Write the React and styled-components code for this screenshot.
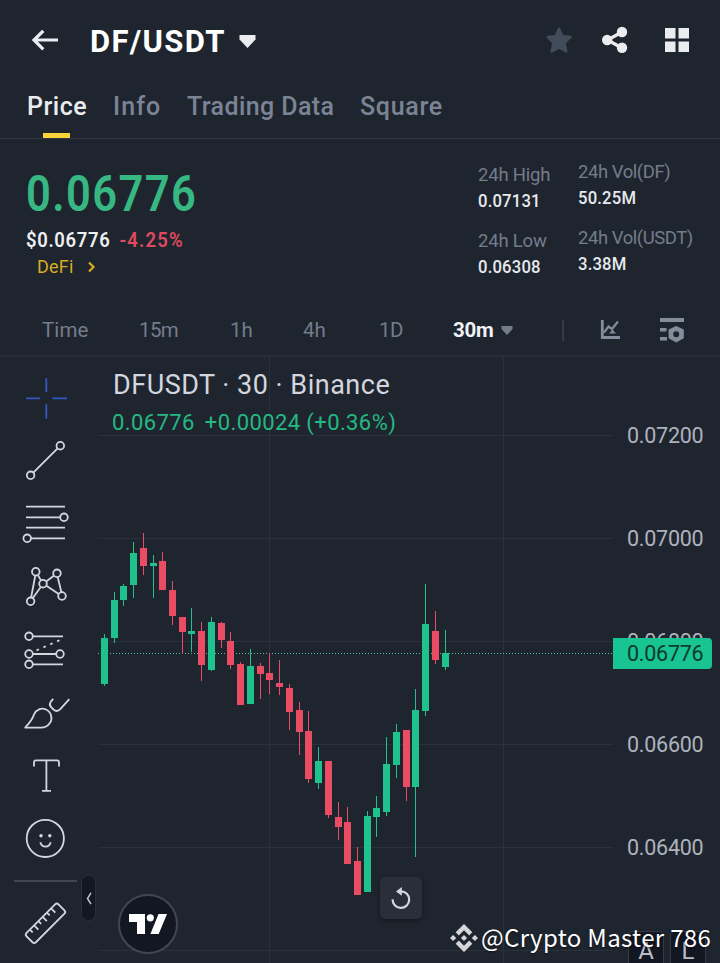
import styled, { createGlobalStyle } from 'styled-components';

const UP = '#1fc18c';
const DOWN = '#ea4d63';

const GlobalStyle = createGlobalStyle`
    * {
        box-sizing: border-box;
    }

    body {
        margin: 0;
        background-color: #1f252f;
        font-family: Roboto, 'Liberation Sans', sans-serif;
    }
`

const Screen = styled.div`
    width: 720px;
    height: 963px;
    display: flex;
    flex-direction: column;
    position: relative;
    overflow: hidden;
    background-color: #1f252f;
    white-space: nowrap;
`

const Header = styled.header`
    height: 82px;
    padding: 0 29px 0 31px;
    display: flex;
    align-items: center;
`

const Title = styled.h1`
    margin: 1px 13px 0 31px;
    font-size: 31px;
    font-weight: 700;
    letter-spacing: 1.3px;
    color: #fff;
`

const Actions = styled.div`
    margin-left: auto;
    display: flex;
    align-items: center;
    gap: 28px;
    height: 30px;
    margin-bottom: 2px;
`

const Tabs = styled.nav`
    height: 57px;
    padding-left: 27px;
    display: flex;
    border-bottom: 1px solid #303741;
`

const Tab = styled.a`
    width: ${({ $width }) => $width}px;
    margin-right: 27px;
    font-size: 25px;
    font-weight: 500;
    line-height: 49px;
    letter-spacing: ${({ $spacing }) => $spacing};
    color: ${({ $active }) => ($active ? '#eaecef' : '#7b8494')};

    &::after {
        content: '';
        display: block;
        width: 27px;
        height: 5px;
        margin: 2px auto 0;
        background-color: ${({ $active }) => ($active ? '#f8d33a' : 'transparent')};
    }
`

const Summary = styled.section`
    height: 165px;
    display: grid;
    grid-template-columns: 451px 100px 1fr;
    padding-left: 27px;
`

// Roboto digits squeezed to the narrow look of the price font
const LastPrice = styled.div`
    margin: 27px 0 0 -1px;
    font-size: 50px;
    font-weight: 600;
    line-height: 56px;
    letter-spacing: 1.6px;
    color: #37b883;
    transform: scaleX(0.87);
    transform-origin: left;
`

const FiatRow = styled.div`
    margin: 4px 0 0 -1px;
    display: flex;
    gap: 10px;
    font-size: 20.5px;
    font-weight: 600;
    line-height: 28px;
    letter-spacing: 0.75px;
    color: #eef0f3;
    transform: scaleX(0.9);
    transform-origin: left;
`

const Change = styled.span`
    letter-spacing: 1.3px;
    color: #e04a60;
`

const Category = styled.a`
    padding-left: 10px;
    display: flex;
    align-items: center;
    gap: 14px;
    font-size: 18px;
    line-height: 26px;
    letter-spacing: 0.2px;
    color: #d9ab1e;
`

const StatColumn = styled.div`
    padding-top: ${({ $top }) => $top}px;
    display: flex;
    flex-direction: column;
    gap: 14px;
    letter-spacing: ${({ $spacing }) => $spacing};
`

const StatLabel = styled.div`
    font-size: 18.5px;
    line-height: 26px;
    color: #737c8a;
`

const StatValue = styled.div`
    font-size: 18.5px;
    font-weight: 500;
    line-height: 26px;
    letter-spacing: 0.2px;
    color: #e6e9ed;
    transform: scaleX(0.9);
    transform-origin: left;
`

const Intervals = styled.div`
    height: 53px;
    padding: 1px 0 0 42px;
    display: grid;
    grid-template-columns: 97px 91px 73px 76px 74px 109px 38px 59px auto;
    align-items: center;
    border-bottom: 2px solid #282e38;
`

const Interval = styled.span`
    display: flex;
    align-items: center;
    gap: 8px;
    font-size: 20.5px;
    font-weight: ${({ $active }) => ($active ? 700 : 400)};
    letter-spacing: ${({ $spacing }) => $spacing};
    color: ${({ $active }) => ($active ? '#f0f2f5' : '#737c8b')};
`

const Separator = styled.span`
    width: 2px;
    height: 21px;
    background-color: #343b46;
`

const Body = styled.main`
    flex: 1;
    display: grid;
    grid-template-columns: 98px 515px 1fr;
`

const Toolbar = styled.aside`
    position: relative;
    padding-top: 9px;
    display: flex;
    flex-direction: column;
`

const ToolIcon = styled.svg`
    width: 90px;
    height: 63px;
    flex: none;
    fill: none;
    stroke: ${({ $color }) => $color || '#d3d6df'};
    stroke-width: 1.8;
    stroke-linejoin: round;
`

const ToolDivider = styled.div`
    width: 63px;
    height: 2px;
    margin: 10px 0 10px 14px;
    flex: none;
    background-color: #434651;
`

const CollapseHandle = styled.button`
    position: absolute;
    left: 81px;
    top: 518px;
    width: 15px;
    height: 46px;
    padding: 0;
    display: grid;
    place-items: center;
    border: 1px solid #2a2e39;
    border-radius: 7px;
    background-color: #131722;
`

const Pane = styled.section`
    position: relative;
    height: 606px;
`

const Plot = styled.svg`
    display: block;
    width: 515px;
    height: 606px;
`

const Legend = styled.div`
    position: absolute;
    left: 15px;
    top: 9px;
`

const Symbol = styled.div`
    font-size: 27px;
    line-height: 38px;
    letter-spacing: 0.5px;
    color: #d3d6df;
`

const LegendValues = styled.div`
    display: flex;
    gap: 10px;
    margin-left: -1px;
    font-size: 22px;
    line-height: 37px;
    letter-spacing: 0.4px;
    color: #24b981;
`

const Badge = styled.div`
    position: absolute;
    left: 20px;
    bottom: 9px;
    width: 60px;
    height: 60px;
    display: grid;
    place-items: center;
    border: 2px solid #434651;
    border-radius: 50%;
    background-color: #131722;
`

const ResetButton = styled.button`
    position: absolute;
    left: 282px;
    top: 520px;
    width: 42px;
    height: 42px;
    padding: 0;
    display: grid;
    place-items: center;
    border: 0;
    border-radius: 5px;
    background-color: #2a2e39;
    box-shadow: 0 2px 5px rgba(0, 0, 0, 0.4);
`

const PriceAxis = styled.aside`
    position: relative;
    height: 606px;
    padding: 27px 0 0 14px;
    overflow: hidden;
`

const AxisLabel = styled.div`
    font-size: 21.5px;
    line-height: 103px;
    letter-spacing: -0.25px;
    color: #aeb2bd;
`

const PriceTag = styled.div`
    position: absolute;
    left: 0;
    top: 281px;
    width: 99px;
    height: 31px;
    padding-left: 14px;
    border-radius: 0 4px 4px 0;
    background-color: #17c492;
    font-size: 21.5px;
    line-height: 32px;
    letter-spacing: -0.25px;
    color: #10392f;
`

const ScaleButtons = styled.div`
    position: absolute;
    left: 15px;
    top: 574px;
    display: flex;
    gap: 6px;
`

const ScaleButton = styled.button`
    width: 36px;
    height: 40px;
    padding: 0;
    border: 1px solid #363a45;
    border-radius: 5px;
    background-color: #131722;
    font-family: inherit;
    font-size: 24px;
    line-height: 38px;
    color: #b9bdc9;
`

const Watermark = styled.div`
    position: absolute;
    left: 450px;
    top: 922px;
    display: flex;
    align-items: center;
    gap: 3px;
    font-family: 'Noto Sans CJK SC', sans-serif;
    font-size: 24px;
    line-height: 34px;
    letter-spacing: 0.35px;
    color: #fff;
    text-shadow: 0 1px 2px rgba(0, 0, 0, 0.6);
`

const WatermarkName = styled.span`
    margin-top: -2px;
`

// [x, wick top, body top, body bottom, wick bottom, rising]
const candles = [
    [101, 634, 638, 684, 686, 1],
    [111, 592, 600, 638, 643, 1],
    [120, 584, 586, 600, 606, 1],
    [130, 542, 553, 585, 598, 1],
    [140, 533, 548, 566, 575, 0],
    [150, 555, 563, 566, 598, 1],
    [159, 552, 561, 590, 590, 0],
    [169, 581, 590, 616, 625, 0],
    [179, 617, 617, 632, 654, 0],
    [188, 608, 631, 634, 652, 1],
    [198, 622, 631, 665, 681, 0],
    [208, 617, 622, 670, 671, 1],
    [218, 622, 623, 640, 648, 0],
    [227, 632, 641, 665, 669, 0],
    [237, 662, 664, 705, 705, 0],
    [247, 649, 666, 704, 704, 1],
    [257, 663, 666, 674, 699, 0],
    [266, 653, 673, 680, 694, 0],
    [276, 660, 683, 687, 695, 0],
    [286, 684, 688, 712, 730, 0],
    [296, 702, 710, 732, 755, 0],
    [305, 711, 731, 779, 783, 0],
    [315, 747, 761, 783, 789, 1],
    [325, 761, 761, 815, 818, 0],
    [335, 802, 817, 827, 840, 0],
    [344, 807, 822, 864, 864, 0],
    [354, 847, 861, 895, 895, 0],
    [364, 811, 816, 892, 892, 1],
    [373, 796, 808, 817, 837, 1],
    [383, 737, 764, 812, 816, 1],
    [393, 724, 732, 765, 778, 1],
    [403, 730, 730, 787, 801, 0],
    [412, 689, 710, 787, 857, 1],
    [422, 584, 624, 711, 716, 1],
    [432, 611, 631, 660, 664, 0],
    [442, 630, 653, 667, 670, 1],
];

const gridRows = [435, 538, 641, 744, 847, 950];
const gridColumns = [269, 503];
const axisPrices = ['0.07200', '0.07000', '0.06800', '0.06600', '0.06400'];

function Chart() {
    return (
        <Plot viewBox="98 357 515 606">
            {gridRows.map(y => <rect key={y} x="98" y={y} width="515" height="1" fill="#2b313b" />)}
            {gridColumns.map(x => <rect key={x} x={x} y="357" width="1" height="606" fill="#2b313b" />)}
            <path d="M98 653.5H613" stroke="#4fc09b" strokeDasharray="1 2" />
            {candles.map(([x, high, top, bottom, low, rising]) => (
                <g key={x} fill={rising ? UP : DOWN}>
                    <rect x={x + 3} y={high} width="1" height={low - high} />
                    <rect x={x} y={top} width="7" height={bottom - top} />
                </g>
            ))}
        </Plot>
    );
}

function Caret({ width, height, color }) {
    return (
        <svg width={width} height={height} viewBox="0 0 17 13">
            <path d="M.5 0h16v4.5L8.5 13 .5 4.5z" fill={color} />
        </svg>
    );
}

function Tools() {
    return (
        <Toolbar>
            <ToolIcon $color="#3358c4">
                <path d="M46.3 12.3v14M46.3 38.3v14.5M26 32.3h14M52.3 32.3H67" />
            </ToolIcon>
            <ToolIcon>
                <circle cx="60.3" cy="16.7" r="3.8" />
                <circle cx="30.6" cy="46.3" r="3.8" />
                <path d="M57.6 19.4 33.3 43.6" />
            </ToolIcon>
            <ToolIcon>
                <path d="M26 14.7h39M26 25.3h34M26 35.7h39M31 46.3h34" />
                <circle cx="64" cy="25.3" r="3.8" />
                <circle cx="27.2" cy="46.3" r="3.8" />
            </ToolIcon>
            <ToolIcon>
                <circle cx="35.8" cy="16.7" r="3.8" />
                <circle cx="57" cy="18.3" r="3.8" />
                <circle cx="43" cy="28.7" r="3.8" />
                <circle cx="30.6" cy="46.3" r="3.8" />
                <circle cx="62" cy="41" r="3.8" />
                <path d="M37.8 20 41 25.4M46.2 26.5 53.8 20.7M57.7 22 61.4 37.2M46.4 30.7 58.7 39M40.8 31.9 32.8 43.1M35.3 20.5 31.1 42.5" />
            </ToolIcon>
            <ToolIcon>
                <circle cx="29" cy="18.3" r="3.8" />
                <circle cx="29" cy="36" r="3.8" />
                <circle cx="60" cy="36" r="3.8" />
                <circle cx="29" cy="46.3" r="3.8" />
                <path d="M33 18.3h30M33 36h23M33 46.3h30" />
                <path d="M36.5 32.3 62 21.2" strokeDasharray="2.6 4.9" />
            </ToolIcon>
            <ToolIcon>
                <path d="M25.2 46.6C29 42.5 32.5 38.5 34 33.5C36 28.5 41.5 26.3 46 28.5C51.5 31 53 38 49.7 42.3C47.5 45.5 44.5 46.6 41 46.6Z" />
                <path d="M53.3 17.8 50.8 20.7C49.3 22.7 49.5 24.4 51 26L53.5 28.5C55.7 30.5 58.3 30.3 60.3 28.2L69.3 18.2" />
            </ToolIcon>
            <ToolIcon>
                <path d="M34 22.5v-4.2q0-2 2-2h21q2 0 2 2v4.2M46.4 16.3v30.5M42 46.8h9" />
            </ToolIcon>
            <ToolIcon>
                <circle cx="45.3" cy="31.4" r="18.6" />
                <circle cx="41" cy="28.8" r="1.7" fill="#d3d6df" stroke="none" />
                <circle cx="49.8" cy="28.8" r="1.7" fill="#d3d6df" stroke="none" />
                <path d="M40.3 35.2Q41.5 39.6 45.5 39.6T50.7 35.2" />
            </ToolIcon>
            <ToolDivider />
            <ToolIcon>
                <g transform="translate(45.5 31.3) rotate(-45)">
                    <rect x="-22.6" y="-6.6" width="45.2" height="13.2" rx="2.4" />
                    <path d="M-15.5-6.6v4M-9.5-6.6v6M-3.5-6.6v4M2.5-6.6v6M8.5-6.6v4M14.5-6.6v6" />
                </g>
            </ToolIcon>
            <CollapseHandle>
                <svg width="6" height="13" viewBox="0 0 6 13" fill="none" stroke="#c3c6cf" strokeWidth="1.5">
                    <path d="M5 .8 1.5 6.5 5 12.2" />
                </svg>
            </CollapseHandle>
        </Toolbar>
    );
}

export default function App() {
    return (
        <Screen>
            <GlobalStyle />
            <Header>
                <svg width="28" height="22" viewBox="0 0 28 22" fill="none" stroke="#eaecef" strokeWidth="3.2">
                    <path d="M12.3.8 3 10l9.3 9.3M3 10h24" />
                </svg>
                <Title>DF/USDT</Title>
                <Caret width="17" height="13" color="#eaecef" />
                <Actions>
                    <svg width="28" height="28" viewBox="0 0 28 28">
                        <path
                            d="M14 2.7 17.4 10.2 25.4 11.1 19.5 16.8 21.3 25.5 14 21.4 6.7 25.5 8.5 16.8 2.6 11.1 10.6 10.2Z"
                            fill="#434c5a"
                            stroke="#434c5a"
                            strokeWidth="2.5"
                            strokeLinejoin="round"
                        />
                    </svg>
                    <svg width="28" height="28" viewBox="0 0 28 28" fill="#eaecef">
                        <path d="M21 6 6.5 14 21 22" fill="none" stroke="#eaecef" strokeWidth="3.2" />
                        <circle cx="6.2" cy="14" r="5.2" />
                        <circle cx="21" cy="6" r="5.2" />
                        <circle cx="21" cy="21.8" r="5.2" />
                    </svg>
                    <svg width="34" height="28" viewBox="0 0 34 28" fill="#eaecef">
                        <path d="M8 2h10.5v10.5H8zM21.5 2H32v10.5H21.5zM8 15.5h10.5V26H8zM21.5 15.5H32V26H21.5z" />
                    </svg>
                </Actions>
            </Header>
            <Tabs>
                <Tab $active $width={59} $spacing="0.5px">Price</Tab>
                <Tab $width={47} $spacing="1.1px">Info</Tab>
                <Tab $width={146} $spacing="0.4px">Trading Data</Tab>
                <Tab $width={83} $spacing="0.7px">Square</Tab>
            </Tabs>
            <Summary>
                <div>
                    <LastPrice>0.06776</LastPrice>
                    <FiatRow>
                        <span>$0.06776</span>
                        <Change>-4.25%</Change>
                    </FiatRow>
                    <Category>
                        DeFi
                        <svg width="9" height="12" viewBox="0 0 9 12" fill="none" stroke="#d9ab1e" strokeWidth="2.2">
                            <path d="M2 1.5 6.5 6 2 10.5" />
                        </svg>
                    </Category>
                </div>
                <StatColumn $top={23} $spacing="-0.2px">
                    <div>
                        <StatLabel>24h High</StatLabel>
                        <StatValue>0.07131</StatValue>
                    </div>
                    <div>
                        <StatLabel>24h Low</StatLabel>
                        <StatValue>0.06308</StatValue>
                    </div>
                </StatColumn>
                <StatColumn $top={20} $spacing="-0.45px">
                    <div>
                        <StatLabel>24h Vol(DF)</StatLabel>
                        <StatValue>50.25M</StatValue>
                    </div>
                    <div>
                        <StatLabel>24h Vol(USDT)</StatLabel>
                        <StatValue>3.38M</StatValue>
                    </div>
                </StatColumn>
            </Summary>
            <Intervals>
                <Interval $spacing="0.1px">Time</Interval>
                <Interval $spacing="-0.6px">15m</Interval>
                <Interval>1h</Interval>
                <Interval>4h</Interval>
                <Interval $spacing="-0.5px">1D</Interval>
                <Interval $active $spacing="-0.3px">
                    30m
                    <Caret width="12" height="9" color="#737c8b" />
                </Interval>
                <Separator />
                <svg width="20" height="20" viewBox="0 0 20 20" fill="none" stroke="#848d9b" strokeWidth="2.8">
                    <path d="M2.3 0v17.5H20" />
                    <path d="M4 12.5 8.5 6.5 12 9 18 1.5" strokeWidth="2.2" />
                    <path d="M12.5 9.5 16 13.5H9z" fill="#848d9b" stroke="none" />
                </svg>
                <svg width="26" height="26" viewBox="0 0 26 26" fill="#848d9b">
                    <path d="M1 1h24v4H1zM1 11h6.5v3.5H1zM1 20h7v3.5H1z" />
                    <path d="m17.2 9 7.6 3.4v8.8l-7.6 4.4-7.6-4.4v-8.8zm0 5.3a3 3 0 1 0 0 6 3 3 0 0 0 0-6z" fillRule="evenodd" />
                </svg>
            </Intervals>
            <Body>
                <Tools />
                <Pane>
                    <Chart />
                    <Legend>
                        <Symbol>DFUSDT · 30 · Binance</Symbol>
                        <LegendValues>
                            <span>0.06776</span>
                            <span>+0.00024 (+0.36%)</span>
                        </LegendValues>
                    </Legend>
                    <Badge>
                        <svg width="38" height="20" viewBox="0 0 38 20" fill="#fff">
                            <path d="M0 0h16v20H8V8H0zM29.5 0H38l-8.3 20h-8.3z" />
                            <circle cx="21.3" cy="3.8" r="3.6" />
                        </svg>
                    </Badge>
                    <ResetButton>
                        <svg width="22" height="24" viewBox="0 0 22 24" fill="none" stroke="#d3d6df" strokeWidth="2.2">
                            <path d="M2.6 13.2A8.3 8.3 0 1 0 11 5.3H9" />
                            <path d="M11.8 1v8.8L6 5.4z" fill="#d3d6df" stroke="none" />
                        </svg>
                    </ResetButton>
                </Pane>
                <PriceAxis>
                    {axisPrices.map(price => <AxisLabel key={price}>{price}</AxisLabel>)}
                    <PriceTag>0.06776</PriceTag>
                    <ScaleButtons>
                        <ScaleButton>A</ScaleButton>
                        <ScaleButton>L</ScaleButton>
                    </ScaleButtons>
                </PriceAxis>
            </Body>
            <Watermark>
                <svg width="28" height="28" viewBox="0 0 28 28" fill="#d5d6d8">
                    <path d="M14 0 22.3 8.3 19.2 11.4 14 6.2 8.8 11.4 5.7 8.3zM14 28 22.3 19.7 19.2 16.6 14 21.8 8.8 16.6 5.7 19.7zM14 10.9 17.1 14 14 17.1 10.9 14zM3.1 10.9 6.2 14 3.1 17.1 0 14zM24.9 10.9 28 14 24.9 17.1 21.8 14z" />
                </svg>
                <WatermarkName>@Crypto Master 786</WatermarkName>
            </Watermark>
        </Screen>
    );
}
